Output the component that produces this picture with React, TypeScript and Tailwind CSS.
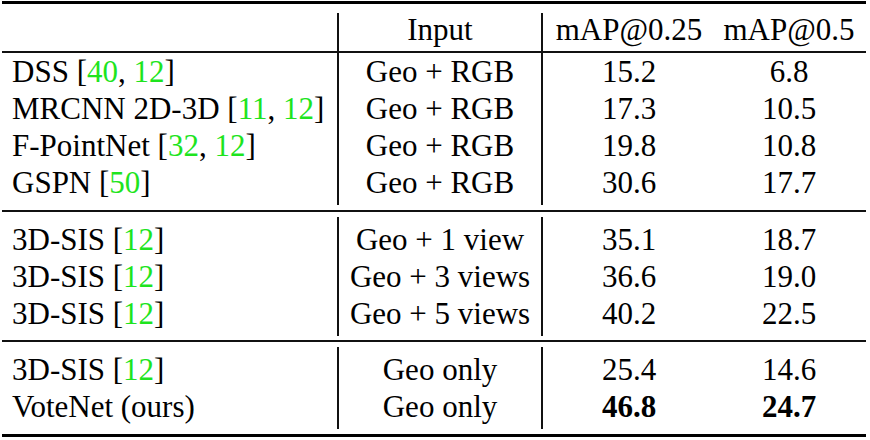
import React from 'react';

type Row = {
  method: string;
  cites: string[];
  input: string;
  ap25: string;
  ap50: string;
  bold?: boolean;
};

const groups: Row[][] = [
  [
    { method: 'DSS', cites: ['40', '12'], input: 'Geo + RGB', ap25: '15.2', ap50: '6.8' },
    { method: 'MRCNN 2D-3D', cites: ['11', '12'], input: 'Geo + RGB', ap25: '17.3', ap50: '10.5' },
    { method: 'F-PointNet', cites: ['32', '12'], input: 'Geo + RGB', ap25: '19.8', ap50: '10.8' },
    { method: 'GSPN', cites: ['50'], input: 'Geo + RGB', ap25: '30.6', ap50: '17.7' },
  ],
  [
    { method: '3D-SIS', cites: ['12'], input: 'Geo + 1 view', ap25: '35.1', ap50: '18.7' },
    { method: '3D-SIS', cites: ['12'], input: 'Geo + 3 views', ap25: '36.6', ap50: '19.0' },
    { method: '3D-SIS', cites: ['12'], input: 'Geo + 5 views', ap25: '40.2', ap50: '22.5' },
  ],
  [
    { method: '3D-SIS', cites: ['12'], input: 'Geo only', ap25: '25.4', ap50: '14.6' },
    { method: 'VoteNet (ours)', cites: [], input: 'Geo only', ap25: '46.8', ap50: '24.7', bold: true },
  ],
];

const Method = ({ row }: { row: Row }) => (
  <div className="whitespace-nowrap">
    {row.method}
    {row.cites.length > 0 && (
      <>
        {' ['}
        {row.cites.map((c, i) => (
          <React.Fragment key={c}>
            {i > 0 && ', '}
            <span className="text-[#1ee41e]">{c}</span>
          </React.Fragment>
        ))}
        {']'}
      </>
    )}
  </div>
);

const Group = ({ rows, first }: { rows: Row[]; first?: boolean }) => {
  const pad = first ? 'pt-0 pb-[4px]' : 'py-[4px]';
  return (
    <div className="grid grid-cols-[335px_206px_172px_151px] leading-[37px]">
      <div className={`${pad} pl-[10px]`}>
        {rows.map((r, i) => (
          <Method key={i} row={r} />
        ))}
      </div>
      <div className={`${pad} border-x-2 border-[#111] text-center`}>
        {rows.map((r, i) => (
          <div key={i} className="whitespace-nowrap">{r.input}</div>
        ))}
      </div>
      <div className={`${pad} text-center`}>
        {rows.map((r, i) => (
          <div key={i} className={r.bold ? 'font-bold' : ''}>{r.ap25}</div>
        ))}
      </div>
      <div className={`${pad} pr-[3px] text-center`}>
        {rows.map((r, i) => (
          <div key={i} className={r.bold ? 'font-bold' : ''}>{r.ap50}</div>
        ))}
      </div>
    </div>
  );
};

export default function App() {
  return (
    <div className="w-[870px] h-[440px] bg-white pl-[2px] pt-[1px] text-black text-[31px] font-['Liberation_Serif',serif]">
      <div className="w-[864px]">
        <div className="h-[3px] bg-black" />
        <div className="h-[9px]" />
        {/* header */}
        <div className="grid grid-cols-[335px_206px_172px_151px] leading-[33px]">
          <div className="h-[38px]" />
          <div className="h-[38px] border-x-2 border-[#111] text-center">Input</div>
          <div className="h-[38px] text-center">mAP@0.25</div>
          <div className="h-[38px] pr-[3px] text-center">mAP@0.5</div>
        </div>
        <div className="h-[2px] bg-[#111]" />
        <Group rows={groups[0]} first />
        <div className="mt-[5px] h-[2px] bg-[#111]" />
        <div className="mt-[5px]">
          <Group rows={groups[1]} />
        </div>
        <div className="mt-[4px] h-[2px] bg-[#111]" />
        <div className="mt-[5px]">
          <Group rows={groups[2]} />
        </div>
        <div className="mt-[5px] h-[3px] bg-black" />
      </div>
    </div>
  );
}
